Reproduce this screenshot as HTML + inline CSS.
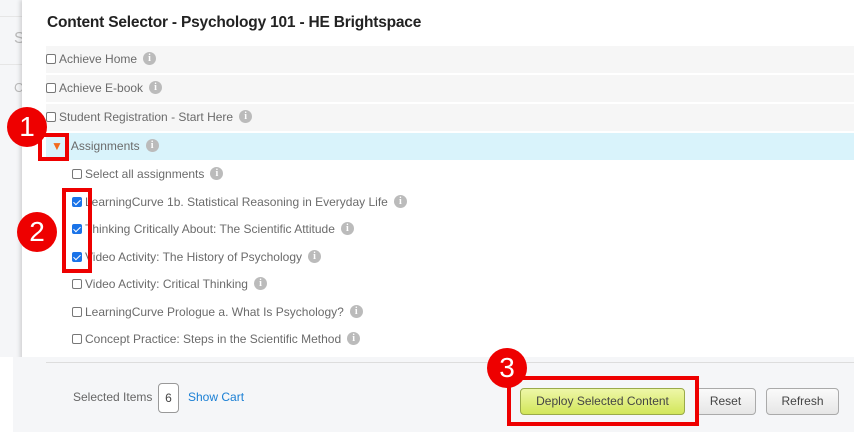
<!DOCTYPE html>
<html><head><style>
*{margin:0;padding:0;box-sizing:border-box}
body{width:854px;height:432px;overflow:hidden;background:#fff;font-family:"Liberation Sans",sans-serif;position:relative;color:#555}
.abs{position:absolute}
.row{position:absolute;left:46px;right:0;height:27px;background:#f6f6f6;font-size:12px;line-height:27px;color:#6b6b6b}
.cb{display:inline-block;width:10px;height:10px;border:1px solid #777;border-radius:2px;vertical-align:middle;margin-right:3px;background:#fff;margin-top:-2px}
.ck{background:#1a73e8;border-color:#1a73e8;position:relative}
.ck:after{content:"";position:absolute;left:2px;top:0px;width:3px;height:6px;border:solid #fff;border-width:0 1.5px 1.5px 0;transform:rotate(45deg)}
.i{display:inline-block;width:13px;height:13px;border-radius:50%;background:#bbb;color:#fff;font-size:10px;line-height:13px;text-align:center;font-weight:bold;font-family:"Liberation Serif",serif;margin-left:6px;vertical-align:middle;margin-top:-3px}
.sub{position:absolute;left:72px;font-size:12px;color:#6b6b6b;line-height:16px}
.badge{position:absolute;width:40px;height:40px;border-radius:50%;background:#e00;color:#fff;font-size:28px;line-height:40px;text-align:center}
.box{position:absolute;border:4px solid #e00}
.btn{position:absolute;height:27px;border:1px solid #aaa;border-radius:4px;background:linear-gradient(#fafafa,#e6e6e6);font-size:12px;line-height:25px;text-align:center;color:#444}
</style></head><body>
<div class="abs" style="left:0;top:0;width:24px;height:357px;background:#f5f6f8"></div>
<div class="abs" style="left:0;top:16px;width:24px;height:1px;background:#e6e6e6"></div>
<div class="abs" style="left:0;top:64px;width:24px;height:1px;background:#e6e6e6"></div>
<div class="abs" style="left:14px;top:30px;font-size:16px;color:#bbb">S</div>
<div class="abs" style="left:14px;top:80px;font-size:13px;color:#bbb">C</div>
<div class="abs" style="left:22px;top:0;width:832px;height:432px;background:#fff;box-shadow:-2px 0 4px rgba(0,0,0,.15)"></div>
<div class="abs" style="left:47px;top:14px;font-size:15.5px;font-weight:bold;color:#222;letter-spacing:-0.2px">Content Selector - Psychology 101 - HE Brightspace</div>
<div class="row" style="top:46px"><span class="cb"></span>Achieve Home<span class="i">i</span></div>
<div class="row" style="top:75px"><span class="cb"></span>Achieve E-book<span class="i">i</span></div>
<div class="row" style="top:104px"><span class="cb"></span>Student Registration - Start Here<span class="i">i</span></div>
<div class="row" style="top:133px;background:#d9f3fb"><span style="color:#f26b1d;font-size:12px;margin-left:5px">▼</span><span style="margin-left:8px">Assignments</span><span class="i">i</span></div>
<div class="sub" style="top:166px"><span class="cb"></span>Select all assignments<span class="i">i</span></div>
<div class="sub" style="top:194px"><span class="cb ck"></span>LearningCurve 1b. Statistical Reasoning in Everyday Life<span class="i">i</span></div>
<div class="sub" style="top:221px"><span class="cb ck"></span>Thinking Critically About: The Scientific Attitude<span class="i">i</span></div>
<div class="sub" style="top:249px"><span class="cb ck"></span>Video Activity: The History of Psychology<span class="i">i</span></div>
<div class="sub" style="top:276px"><span class="cb"></span>Video Activity: Critical Thinking<span class="i">i</span></div>
<div class="sub" style="top:304px"><span class="cb"></span>LearningCurve Prologue a. What Is Psychology?<span class="i">i</span></div>
<div class="sub" style="top:331px"><span class="cb"></span>Concept Practice: Steps in the Scientific Method<span class="i">i</span></div>
<div class="abs" style="left:13px;top:357px;width:841px;height:75px;background:#f5f6f8"></div>
<div class="abs" style="left:46px;top:362px;width:808px;height:1px;background:#ddd"></div>
<div class="abs" style="left:73px;top:390px;font-size:12px;color:#666">Selected Items</div>
<div class="abs" style="left:158px;top:383px;width:21px;height:30px;border:1px solid #999;border-radius:4px;background:#fff;font-size:12px;line-height:28px;text-align:center;color:#444">6</div>
<div class="abs" style="left:188px;top:390px;font-size:12px;color:#1a7fd4">Show Cart</div>
<div class="btn" style="left:520px;top:388px;width:165px;background:linear-gradient(#eef7a8,#d2e65a);border-color:#9aaa4a">Deploy Selected Content</div>
<div class="btn" style="left:695px;top:388px;width:61px">Reset</div>
<div class="btn" style="left:766px;top:388px;width:73px">Refresh</div>
<div class="box" style="left:38px;top:133px;width:31px;height:28px"></div>
<div class="box" style="left:62px;top:188px;width:30px;height:85px"></div>
<div class="box" style="left:507px;top:376px;width:192px;height:50px"></div>
<div class="badge" style="left:7px;top:107px">1</div>
<div class="badge" style="left:17px;top:212px">2</div>
<div class="badge" style="left:487px;top:348px">3</div>
</body></html>
